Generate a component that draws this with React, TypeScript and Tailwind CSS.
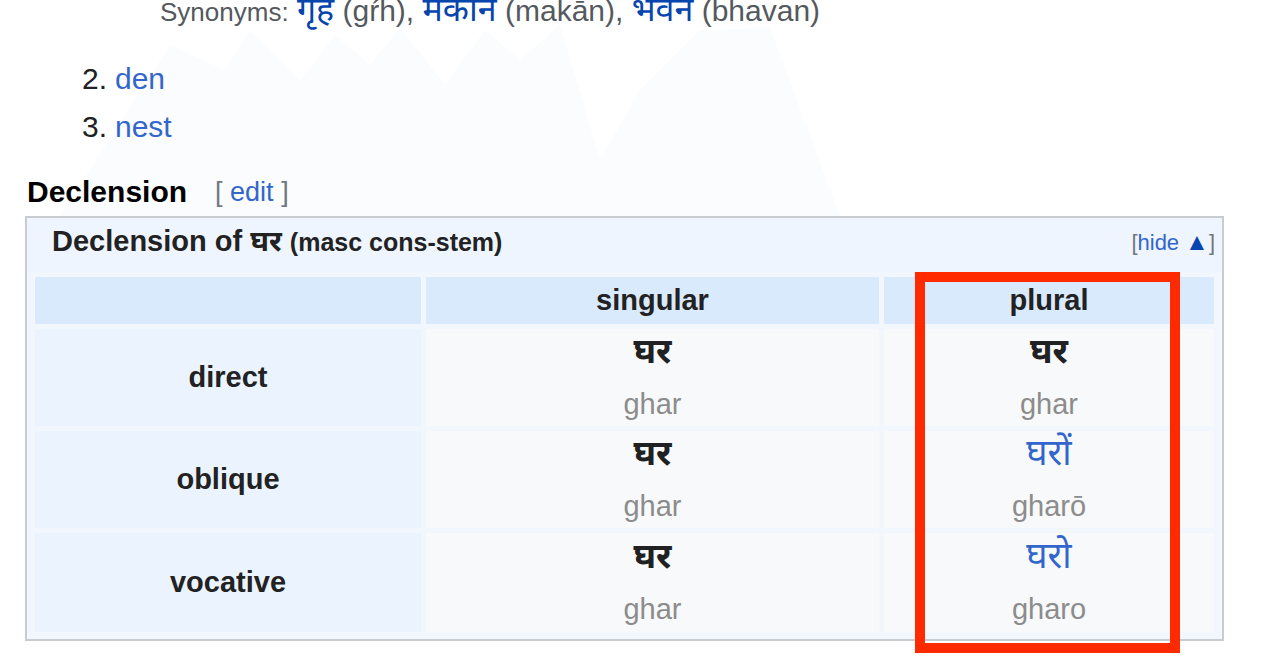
import React from 'react';

const font = "font-['Liberation_Sans','Noto_Sans','Noto_Sans_Devanagari',sans-serif]";

const Cell = ({ deva, tr, link }: { deva: string; tr: string; link?: boolean }) => (
    <td className="bg-[#f8f9fa] p-0 text-center align-middle">
        <div className={link ? 'text-[36px] leading-[36px] text-[#3366cc]' : 'text-[35px] leading-[36px] font-bold text-[#202122]'}>{deva}</div>
        <div className="mt-[17px] text-[29px] leading-[36px] text-[#8c8c8c]">{tr}</div>
    </td>
);

const App = () => {
    const rows = [
        { label: 'direct', h: 'h-[97px]', sg: ['घर', 'ghar'], pl: ['घर', 'ghar', false] },
        { label: 'oblique', h: 'h-[97px]', sg: ['घर', 'ghar'], pl: ['घरों', 'gharō', true] },
        { label: 'vocative', h: 'h-[99px]', sg: ['घर', 'ghar'], pl: ['घरो', 'gharo', true] },
    ] as const;

    return (
        <div className={`relative min-h-[670px] overflow-hidden bg-white text-[#202122] ${font}`}>
            {/* faint watermark behind the page */}
            <svg className="absolute left-0 top-0" width="900" height="216" viewBox="0 0 900 216">
                <path
                    d="M60 216 L170 45 L225 70 L250 30 L300 80 L335 35 L370 65 L400 28 L445 85 L485 30 L520 60 L560 25 L600 160 L640 90 L700 30 L770 28 L840 216 Z"
                    fill="#fbfcfe"
                />
            </svg>

            <div className="relative">
                <p className="mt-[-6px] h-[28px] pl-[160px] text-[30px] leading-[30px] text-[#54595d]">
                    <span className="text-[26px]">Synonyms:</span> <span className="text-[34px] text-[#0645ad]">गृह</span> (gŕh), <span className="text-[34px] text-[#0645ad]">मकान</span> (makān), <span className="text-[34px] text-[#0645ad]">भवन</span> (bhavan)
                </p>

                <ol className="mt-[33px] text-[30px] leading-[48px]">
                    <li className="flex">
                        <span className="w-[115px] pr-[8px] text-right">2.</span>
                        <span className="text-[#3366cc]">den</span>
                    </li>
                    <li className="flex">
                        <span className="w-[115px] pr-[8px] text-right">3.</span>
                        <span className="text-[#3366cc]">nest</span>
                    </li>
                </ol>

                <div className="mt-[21px] flex items-center pl-[27px] leading-[40px]">
                    <h4 className="text-[30px] font-bold text-[#000]">Declension</h4>
                    <span className="ml-[28px] text-[27px] text-[#72777d]">
                        [ <span className="text-[#3366cc]">edit</span> ]
                    </span>
                </div>

                <div className="mx-[25px] mt-[4px] w-[1199px] border-2 border-[#c8ccd1] bg-[#f2f7fd]">
                    <div className="flex h-[54px] items-center justify-between bg-[#eef5fe] pb-[6px] pl-[25px] pr-[7px]">
                        <div className="font-bold text-[#222]">
                            <span className="text-[29px]">Declension of घर </span>
                            <span className="text-[25px]">(masc cons-stem)</span>
                        </div>
                        <div className="flex items-center text-[22px] text-[#72777d]">
                            [<span className="text-[#3366cc]">hide</span>
                            <span className="ml-[6px] text-[24px] text-[#0645ad]">▲</span>]
                        </div>
                    </div>
                    <div className="px-[3px] pb-[2px]">
                        <table className="w-full table-fixed border-separate border-spacing-[5px] text-[29px]">
                            <colgroup>
                                <col className="w-[386px]" />
                                <col className="w-[453px]" />
                                <col className="w-[330px]" />
                            </colgroup>
                            <thead>
                                <tr className="h-[47px]">
                                    <th className="bg-[#d9eafc] p-0"></th>
                                    <th className="bg-[#d9eafc] p-0 font-bold text-[#222]">singular</th>
                                    <th className="bg-[#d9eafc] p-0 font-bold text-[#222]">plural</th>
                                </tr>
                            </thead>
                            <tbody>
                                {rows.map((r) => (
                                    <tr key={r.label} className={r.h}>
                                        <th className="bg-[#eaf3fe] p-0 font-bold text-[#222]">{r.label}</th>
                                        <Cell deva={r.sg[0]} tr={r.sg[1]} />
                                        <Cell deva={r.pl[0]} tr={r.pl[1]} link={r.pl[2]} />
                                    </tr>
                                ))}
                            </tbody>
                        </table>
                    </div>
                </div>
            </div>

            {/* red highlight drawn over the plural column */}
            <div className="absolute left-[915px] top-[272px] h-[381px] w-[265px] border-[10px] border-[#ff2a00]" />
        </div>
    );
};

export default App;
